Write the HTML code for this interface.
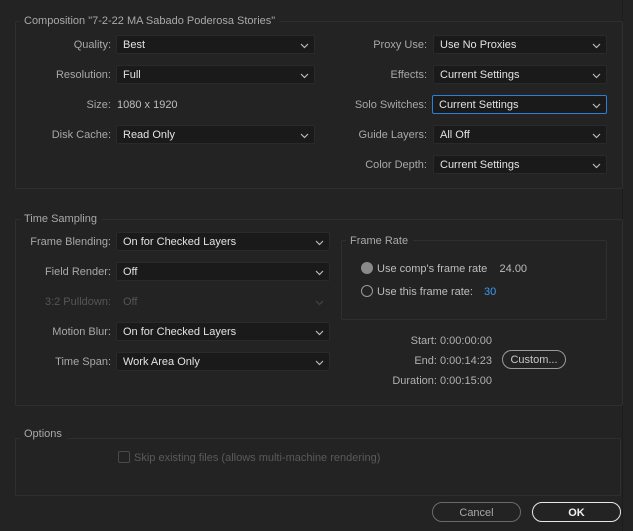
<!DOCTYPE html>
<html><head><meta charset="utf-8"><style>
*{box-sizing:border-box;margin:0;padding:0}
body{width:633px;height:531px;background:#232323;font-family:"Liberation Sans",sans-serif;font-size:11px;color:#bdbdbd;position:relative;overflow:hidden}
.a{position:absolute}
.box{position:absolute;border:1px solid #2f2f2f;border-radius:2px}
.tt{position:absolute;background:#232323;padding:0 5px 0 4px;color:#a9a9a9;font-size:11px;line-height:14px}
.lbl{position:absolute;text-align:right;color:#a8a8a8;line-height:21px}
.sel{position:absolute;height:19px;background:#1a1a1a;border:1px solid #2a2a2a;border-radius:2px;color:#e2e2e2;padding-left:6px;line-height:19px}
.sel svg{position:absolute;right:5px;top:7px}
.dis{color:#555;background:#232323;border-color:#232323}
.btn{position:absolute;height:20px;border:1.5px solid #8a8a8a;border-radius:10px;text-align:center;line-height:20px;color:#c8c8c8}
</style></head><body>
<div class="a" style="left:622px;top:0;width:1px;height:531px;background:#1c1c1c"></div>

<div class="box" style="left:15px;top:21px;width:608px;height:168px"></div>
<div class="tt" style="left:20px;top:14px">Composition "7-2-22 MA Sabado Poderosa Stories"</div>

<div class="lbl" style="left:0;width:111px;top:35px">Quality:</div>
<div class="sel" style="left:116px;top:35px;width:199px">Best<svg width="9" height="6"><path d="M1 1l3.5 3.5L8 1" stroke="#bbb" fill="none" stroke-width="1.2"/></svg></div>
<div class="lbl" style="left:0;width:111px;top:65px">Resolution:</div>
<div class="sel" style="left:116px;top:65px;width:199px">Full<svg width="9" height="6"><path d="M1 1l3.5 3.5L8 1" stroke="#bbb" fill="none" stroke-width="1.2"/></svg></div>
<div class="lbl" style="left:0;width:111px;top:95px">Size:</div>
<div class="a" style="left:117px;top:95px;line-height:21px;color:#bdbdbd">1080 x 1920</div>
<div class="lbl" style="left:0;width:111px;top:125px">Disk Cache:</div>
<div class="sel" style="left:116px;top:125px;width:199px">Read Only<svg width="9" height="6"><path d="M1 1l3.5 3.5L8 1" stroke="#bbb" fill="none" stroke-width="1.2"/></svg></div>

<div class="lbl" style="left:300px;width:127px;top:35px">Proxy Use:</div>
<div class="sel" style="left:433px;top:35px;width:174px">Use No Proxies<svg width="9" height="6"><path d="M1 1l3.5 3.5L8 1" stroke="#bbb" fill="none" stroke-width="1.2"/></svg></div>
<div class="lbl" style="left:300px;width:127px;top:65px">Effects:</div>
<div class="sel" style="left:433px;top:65px;width:174px">Current Settings<svg width="9" height="6"><path d="M1 1l3.5 3.5L8 1" stroke="#bbb" fill="none" stroke-width="1.2"/></svg></div>
<div class="lbl" style="left:300px;width:127px;top:95px">Solo Switches:</div>
<div class="sel" style="left:432px;top:95px;width:175px;border-color:#2f7fd8">Current Settings<svg width="9" height="6"><path d="M1 1l3.5 3.5L8 1" stroke="#bbb" fill="none" stroke-width="1.2"/></svg></div>
<div class="lbl" style="left:300px;width:127px;top:125px">Guide Layers:</div>
<div class="sel" style="left:433px;top:125px;width:174px">All Off<svg width="9" height="6"><path d="M1 1l3.5 3.5L8 1" stroke="#bbb" fill="none" stroke-width="1.2"/></svg></div>
<div class="lbl" style="left:300px;width:127px;top:155px">Color Depth:</div>
<div class="sel" style="left:433px;top:155px;width:174px">Current Settings<svg width="9" height="6"><path d="M1 1l3.5 3.5L8 1" stroke="#bbb" fill="none" stroke-width="1.2"/></svg></div>

<div class="box" style="left:15px;top:219px;width:608px;height:187px"></div>
<div class="tt" style="left:20px;top:212px">Time Sampling</div>

<div class="lbl" style="left:0;width:111px;top:232px">Frame Blending:</div>
<div class="sel" style="left:116px;top:232px;width:214px">On for Checked Layers<svg width="9" height="6"><path d="M1 1l3.5 3.5L8 1" stroke="#bbb" fill="none" stroke-width="1.2"/></svg></div>
<div class="lbl" style="left:0;width:111px;top:262px">Field Render:</div>
<div class="sel" style="left:116px;top:262px;width:214px">Off<svg width="9" height="6"><path d="M1 1l3.5 3.5L8 1" stroke="#bbb" fill="none" stroke-width="1.2"/></svg></div>
<div class="lbl" style="left:0;width:111px;top:292px;color:#555">3:2 Pulldown:</div>
<div class="sel dis" style="left:116px;top:292px;width:214px">Off<svg width="9" height="6"><path d="M1 1l3.5 3.5L8 1" stroke="#444" fill="none" stroke-width="1.2"/></svg></div>
<div class="lbl" style="left:0;width:111px;top:322px">Motion Blur:</div>
<div class="sel" style="left:116px;top:322px;width:214px">On for Checked Layers<svg width="9" height="6"><path d="M1 1l3.5 3.5L8 1" stroke="#bbb" fill="none" stroke-width="1.2"/></svg></div>
<div class="lbl" style="left:0;width:111px;top:352px">Time Span:</div>
<div class="sel" style="left:116px;top:352px;width:214px">Work Area Only<svg width="9" height="6"><path d="M1 1l3.5 3.5L8 1" stroke="#bbb" fill="none" stroke-width="1.2"/></svg></div>

<div class="box" style="left:341px;top:240px;width:266px;height:80px"></div>
<div class="tt" style="left:346px;top:234px">Frame Rate</div>
<div class="a" style="left:361px;top:262px;width:12px;height:12px;border-radius:50%;background:#8a8a8a"></div>
<div class="a" style="left:377px;top:261px;line-height:16px;color:#bdbdbd">Use comp's frame rate&nbsp;&nbsp;&nbsp;&nbsp;24.00</div>
<div class="a" style="left:361px;top:285px;width:12px;height:12px;border-radius:50%;border:1.5px solid #9a9a9a"></div>
<div class="a" style="left:377px;top:284px;line-height:16px;color:#bdbdbd">Use this frame rate:</div>
<div class="a" style="left:484px;top:284px;line-height:16px;color:#3a9bf0">30</div>

<div class="a" style="left:380px;width:112px;text-align:right;top:334px;line-height:14px;color:#b0b0b0">Start: 0:00:00:00</div>
<div class="a" style="left:380px;width:112px;text-align:right;top:354px;line-height:14px;color:#b0b0b0">End: 0:00:14:23</div>
<div class="a" style="left:360px;width:132px;text-align:right;top:374px;line-height:14px;color:#b0b0b0">Duration: 0:00:15:00</div>
<div class="btn" style="left:502px;top:350px;width:64px;height:19px;border-color:#9a9a9a;line-height:19px">Custom...</div>

<div class="box" style="left:15px;top:438px;width:606px;height:58px"></div>
<div class="tt" style="left:20px;top:427px">Options</div>
<div class="a" style="left:118px;top:451px;width:12px;height:12px;border:1px solid #4a4a4a;border-radius:2px"></div>
<div class="a" style="left:134px;top:451px;line-height:14px;color:#5a5a5a">Skip existing files (allows multi-machine rendering)</div>

<div class="btn" style="left:432px;top:502px;width:89px;border-color:#6a6a6a;color:#a8a8a8">Cancel</div>
<div class="btn" style="left:532px;top:502px;width:89px;border-color:#e8e8e8;color:#f0f0f0;font-weight:bold">OK</div>
</body></html>
